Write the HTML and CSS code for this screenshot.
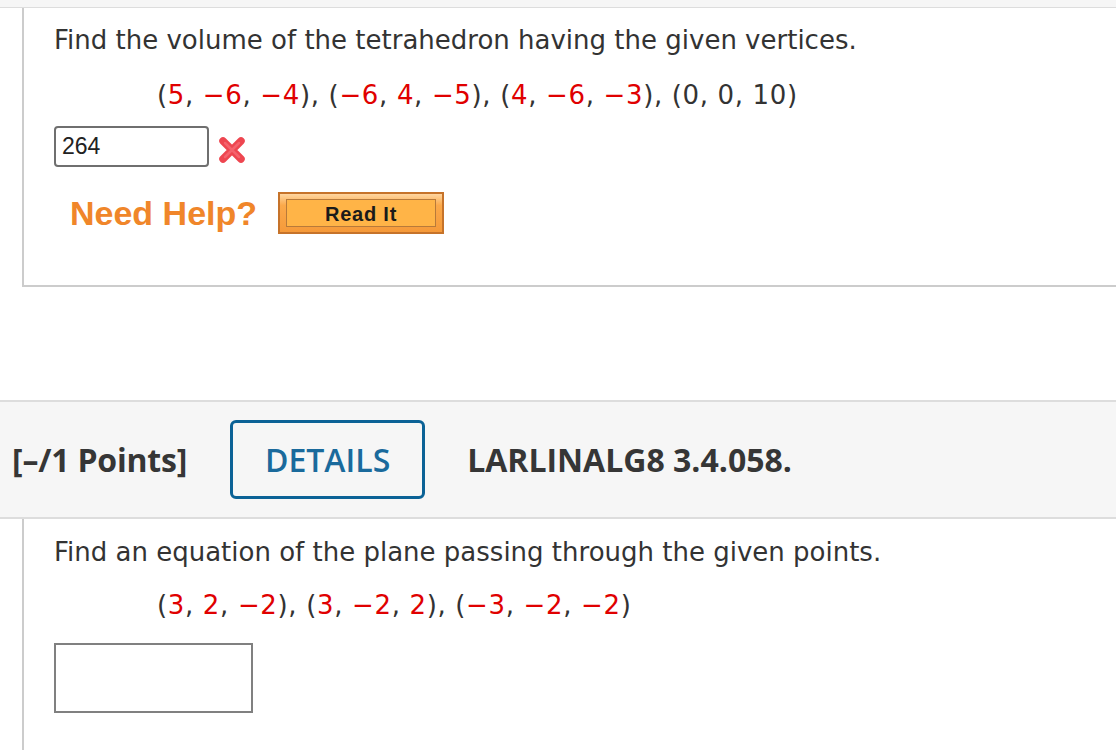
FILE: index.html
```html
<!DOCTYPE html>
<html>
<head>
<meta charset="utf-8">
<link rel="stylesheet" href="styles.css">
</head>
<body>
<div class="topband"></div>
<div class="question q1">
  <p class="prompt">Find the volume of the tetrahedron having the given vertices.</p>
  <p class="points">(<span class="r">5</span>, <span class="r">−6</span>, <span class="r">−4</span>), (<span class="r">−6</span>, <span class="r">4</span>, <span class="r">−5</span>), (<span class="r">4</span>, <span class="r">−6</span>, <span class="r">−3</span>), (0, 0, 10)</p>
  <div class="answer-row">
    <div class="answer">264</div>
    <svg class="xmark" width="30" height="28" viewBox="0 0 30 28">
      <path d="M6 5 L24 23 M24 5 L6 23" stroke="#ee4650" stroke-width="7.5" stroke-linecap="round"/>
      <path d="M8 7 L22 21 M22 7 L8 21" stroke="#f8707a" stroke-width="2.5" stroke-linecap="round" opacity="0.7"/>
    </svg>
  </div>
  <div class="help-row">
    <span class="need-help">Need Help?</span>
    <span class="read-it"><span class="read-it-inner">Read It</span></span>
  </div>
</div>
<div class="gap"></div>
<div class="header">
  <span class="pts">[–/1 Points]</span>
  <span class="details">DETAILS</span>
  <span class="code">LARLINALG8 3.4.058.</span>
</div>
<div class="question q2">
  <p class="prompt">Find an equation of the plane passing through the given points.</p>
  <p class="points">(<span class="r">3</span>, <span class="r">2</span>, <span class="r">−2</span>), (<span class="r">3</span>, <span class="r">−2</span>, <span class="r">2</span>), (<span class="r">−3</span>, <span class="r">−2</span>, <span class="r">−2</span>)</p>
  <div class="empty-box"></div>
</div>
</body>
</html>
```
FILE: styles.css
```css
html, body {
  margin: 0;
  padding: 0;
  background: #fff;
  overflow: hidden;
}
body {
  width: 1116px;
  height: 750px;
  font-family: "DejaVu Sans", Verdana, sans-serif;
  color: #333;
}
.topband {
  height: 7px;
  background: #f6f6f6;
  border-bottom: 1px solid #ddd;
}
.question p {
  margin: 0;
}
.q1 {
  margin-left: 22px;
  border-left: 2px solid #ccc;
  border-bottom: 2px solid #ccc;
  padding-left: 30px;
  box-sizing: border-box;
  height: 279px;
}
.prompt {
  font-size: 26px;
  line-height: 30px;
  padding-top: 17px;
}
.points {
  font-size: 26px;
  line-height: 30px;
  padding-left: 103px;
  padding-top: 25px;
  letter-spacing: 0.65px;
}
.r {
  color: #e00000;
}
.answer-row {
  display: flex;
  align-items: center;
  margin-top: 16px;
  gap: 8px;
}
.answer {
  width: 155px;
  height: 41px;
  box-sizing: border-box;
  border: 2px solid #6f6f6f;
  border-radius: 4px;
  font-family: "Liberation Sans", Arial, sans-serif;
  font-size: 23px;
  line-height: 37px;
  padding-left: 6px;
  color: #222;
}
.xmark {
  display: block;
  margin-top: 6px;
}
.help-row {
  display: flex;
  align-items: center;
  margin-top: 25px;
  padding-left: 16px;
  gap: 21px;
}
.need-help {
  font-family: "Liberation Sans", Arial, sans-serif;
  font-weight: bold;
  font-size: 34px;
  color: #f0862a;
}
.read-it {
  display: block;
  width: 166px;
  height: 42px;
  box-sizing: border-box;
  border: 2px solid #c6732a;
  background: linear-gradient(#ffd6a0, #fba94a 30%, #f59a3a);
  padding: 5px 6px;
}
.read-it-inner {
  display: block;
  height: 100%;
  box-sizing: border-box;
  border: 1px solid #b87a3a;
  background: #ffb447;
  font-family: "Liberation Sans", Arial, sans-serif;
  font-weight: bold;
  font-size: 20px;
  letter-spacing: 0.8px;
  color: #1a1a1a;
  text-align: center;
  line-height: 28px;
}
.gap {
  height: 113px;
}
.header {
  height: 115px;
  background: #f6f6f6;
  border-top: 2px solid #ddd;
  border-bottom: 2px solid #ddd;
  display: flex;
  align-items: center;
  padding-left: 12px;
  font-family: "Open Sans", sans-serif;
  font-weight: bold;
  font-size: 32px;
  color: #363636;
}
.pts {
  letter-spacing: -0.2px;
}
.details {
  margin-left: 43px;
  width: 195px;
  height: 79px;
  box-sizing: border-box;
  border: 3px solid #0b6296;
  border-radius: 6px;
  color: #1a6a9c;
  font-weight: 600;
  display: flex;
  align-items: center;
  justify-content: center;
}
.code {
  margin-left: 42px;
}
.q2 {
  margin-left: 22px;
  border-left: 2px solid #ccc;
  padding-left: 30px;
  height: 231px;
}
.q2 .prompt {
  padding-top: 18px;
}
.q2 .points {
  padding-top: 23px;
}
.empty-box {
  margin-top: 23px;
  width: 199px;
  height: 70px;
  box-sizing: border-box;
  border: 2px solid #808080;
}
```
